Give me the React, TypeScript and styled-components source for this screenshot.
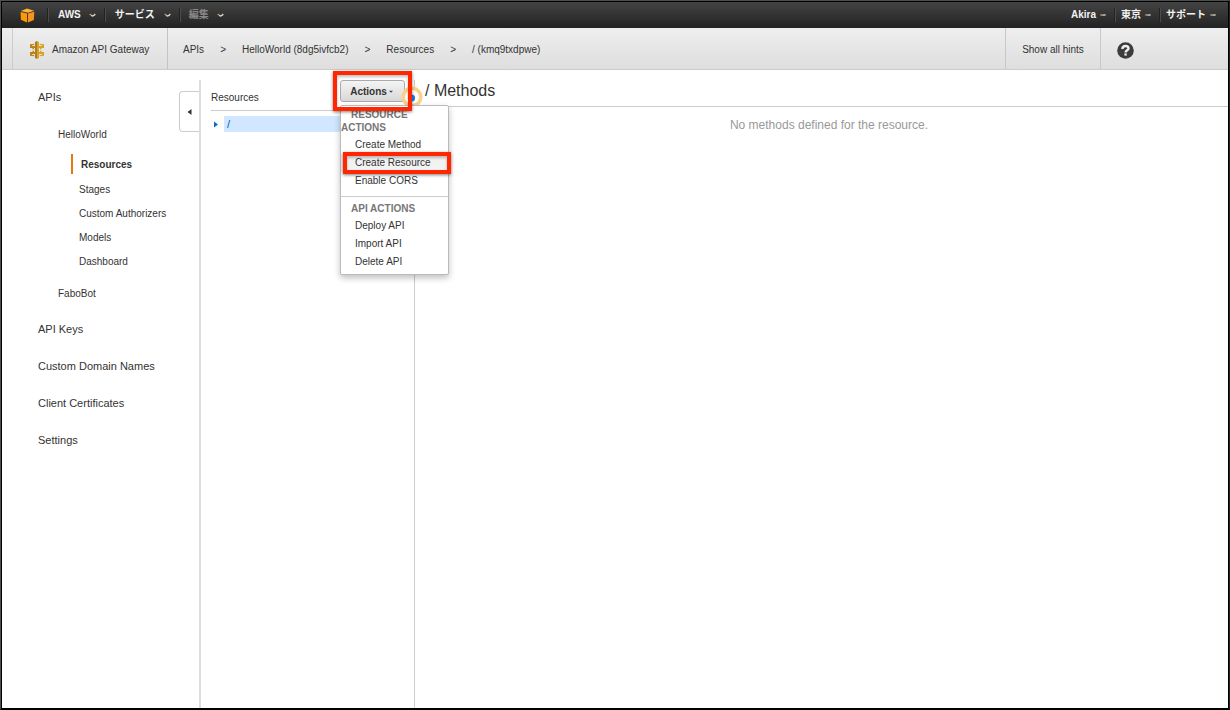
import React from 'react';
import styled, { createGlobalStyle, css } from 'styled-components';

const GlobalStyle = createGlobalStyle`
  *, *::before, *::after { box-sizing: border-box; }
  body {
    margin: 0;
    font-family: "Liberation Sans", "Noto Sans CJK JP", sans-serif;
    font-size: 10px;
    color: #333;
    background: #fff;
  }
  a { color: inherit; text-decoration: none; }
  ul, ol { list-style: none; margin: 0; padding: 0; }
  button { font: inherit; color: inherit; cursor: pointer; }
  svg { display: block; flex: none; }
`;

const Frame = styled.div`
  display: flex;
  min-height: 100vh;
  padding: 1px;
  background: #000;
  border: 1px solid #4b4f4d;
  border-right-color: #222;
  border-bottom-color: #000;
`;

const Page = styled.div`
  flex: 1;
  min-width: 0;
  display: flex;
  flex-direction: column;
  background: #fff;
`;

const TopBar = styled.header`
  display: flex;
  align-items: center;
  justify-content: space-between;
  height: 26px;
  padding: 0 12px 0 18px;
  background: linear-gradient(#444, #222);
`;

const TopGroup = styled.nav`
  display: flex;
  align-items: center;
`;

const Separator = styled.span<{ $before: number; $after: number }>`
  width: 2px;
  height: 14px;
  margin: 0 ${(p) => p.$after}px 0 ${(p) => p.$before}px;
  background: #222;
  border-right: 1px solid #4c4c4c;
`;

const TopItem = styled.button<{ $dim?: boolean; $gap: number }>`
  display: flex;
  align-items: center;
  gap: ${(p) => p.$gap}px;
  padding: 0;
  border: 0;
  background: none;
  font-weight: 700;
  line-height: 16px;
  color: ${(p) => (p.$dim ? '#888' : '#f2f2f2')};
`;

const ServiceBar = styled.div`
  display: flex;
  height: 42px;
  padding-left: 10px;
  background: linear-gradient(#eee, #dedede);
  border-bottom: 1px solid #ccc;
`;

const ServiceName = styled.a`
  display: flex;
  align-items: center;
  gap: 7px;
  width: 156px;
  padding: 2px 0 0 16px;
  border-left: 1px solid #ccc;
  border-right: 1px solid #c4c4c4;
`;

const Breadcrumbs = styled.ol`
  flex: 1;
  display: flex;
  align-items: center;
  gap: 16px;
  padding: 2px 0 0 15px;
`;

const Hints = styled.button`
  width: 96px;
  padding: 2px 0 0;
  background: none;
  border: solid #c8c8c8;
  border-width: 0 1px;
`;

const HelpButton = styled.button`
  display: flex;
  align-items: center;
  width: 127px;
  padding: 4px 0 0 16px;
  border: 0;
  background: none;
`;

const Body = styled.div`
  flex: 1;
  display: flex;
  padding-top: 10px;
`;

const Sidebar = styled.aside`
  flex: none;
  display: flex;
  align-items: flex-start;
  width: 199px;
  border-right: 2px solid #ddd;
`;

const SideNav = styled.nav`
  flex: 1;
  min-width: 0;
  padding-left: 36px;
  white-space: nowrap;
`;

const TopLink = styled.a`
  display: block;
  font-size: 11px;
  line-height: 35px;
  height: 37px;
`;

const ApiLink = styled.a`
  display: block;
  height: 36px;
  padding-left: 20px;
  line-height: 35px;
`;

const SubList = styled.ul`
  padding: 1px 0 3px 33px;
`;

const SubItem = styled.li<{ $active?: boolean }>`
  display: flex;
  align-items: center;
  height: 24px;
  padding-left: 8px;
  ${(p) =>
    p.$active &&
    css`
      height: 20px;
      margin-bottom: 3px;
      border-left: 2px solid #e47911;
      font-weight: 700;
    `}
`;

const Collapse = styled.button`
  display: flex;
  align-items: center;
  width: 20px;
  height: 41px;
  margin-top: 11px;
  padding: 0 0 0 7px;
  background: #fff;
  border: 1px solid #ccc;
  border-right: 0;
  border-radius: 4px 0 0 4px;
`;

const ResourcePane = styled.section`
  position: relative;
  flex: none;
  width: 214px;
  padding: 0 9px 0 10px;
  border-right: 1px solid #ccc;
`;

const PaneHead = styled.div`
  display: flex;
  align-items: flex-start;
  justify-content: space-between;
  height: 31px;
  border-bottom: 1px solid #ccc;
`;

const PaneTitle = styled.h2`
  margin: 0;
  font-size: 10px;
  font-weight: 400;
  line-height: 35px;
`;

const Highlight = styled.span<{ $inset: string }>`
  position: absolute;
  inset: ${(p) => p.$inset};
  z-index: 3;
  border: 4px solid #ff2600;
  box-shadow: 0 1px 3px rgba(0, 0, 0, 0.5), inset 0 2px 3px rgba(0, 0, 0, 0.25);
  pointer-events: none;
`;

const ActionsWrap = styled.div`
  position: relative;
`;

const ActionsButton = styled.button`
  display: flex;
  align-items: center;
  justify-content: center;
  gap: 2px;
  width: 65px;
  height: 22px;
  padding: 0 2px 0 0;
  font-weight: 700;
  background: linear-gradient(#f4f4f4, #d8d8d8);
  border: 1px solid #aaa;
  border-radius: 3px;
`;

const Menu = styled.div`
  position: absolute;
  top: 25px;
  left: 0;
  z-index: 2;
  width: 109px;
  padding: 2px 0 3px;
  background: #fff;
  border: 1px solid #bbb;
  border-radius: 2px;
  box-shadow: 0 3px 6px rgba(0, 0, 0, 0.25);
`;

const MenuHeading = styled.h3`
  margin: 0;
  padding-bottom: 2px;
  text-indent: 10px;
  font-size: 10px;
  font-weight: 700;
  line-height: 13px;
  color: #777;
`;

const MenuItem = styled.button<{ $hover?: boolean }>`
  position: relative;
  display: block;
  width: 100%;
  padding: 0 0 0 14px;
  border: 0;
  background: ${(p) => (p.$hover ? '#f2f2f2' : 'transparent')};
  text-align: left;
  line-height: 18px;
`;

const Divider = styled.hr`
  height: 1px;
  margin: 6px 0 5px;
  border: 0;
  background: #ccc;
`;

const Spinner = styled.svg`
  position: absolute;
  top: 6px;
  right: -9px;
  z-index: 1;
`;

const TreeRow = styled.div`
  display: flex;
  align-items: center;
  gap: 6px;
  height: 16px;
  margin-top: 5px;
  padding-left: 3px;
`;

const TreeLabel = styled.a`
  flex: 1;
  padding-left: 3px;
  font-size: 11px;
  line-height: 16px;
  color: #0a5cb8;
  background: #d0e7ff;
`;

const Main = styled.main`
  flex: 1;
  min-width: 0;
`;

const MainTitle = styled.h1`
  height: 27px;
  margin: 0;
  padding-left: 10px;
  font-size: 16px;
  font-weight: 400;
  line-height: 22px;
  border-bottom: 1px solid #ccc;
`;

const Empty = styled.p`
  margin: 10px 0 0;
  padding-left: 15px;
  font-size: 12px;
  line-height: 16px;
  text-align: center;
  color: #999;
`;

const Chevron = () => (
  <svg width="7" height="6" viewBox="0 0 7 6" fill="none" strokeWidth="1.3">
    <path d="M.7 2 3.300 4" stroke="#c79a62" />
    <path d="M2.300 3.400c1 1 2 .9 4-1.400" stroke="#d8d8d8" />
  </svg>
);

const Dash = () => (
  <svg width="6" height="4" viewBox="0 0 6 4" fill="none" strokeWidth="1.3">
    <path d="M.3 1.800 3 2.200" stroke="#c9a67b" />
    <path d="M2.800 2.200 5.700 1.800" stroke="#ddd" />
  </svg>
);

const Cube = () => (
  <svg width="15" height="15" viewBox="0 0 15 15">
    <path d="M.8 3 7 .6 14.200 2.700 8 4.800z" fill="#ffb13b" />
    <path d="M.6 3.900 7 5.600v8.800L.9 11.800z" fill="#f90" />
    <path d="M7.900 5.600 14.300 3.700 13.800 12 7.900 14.400z" fill="#f7941d" />
  </svg>
);

const GatewayIcon = () => (
  <svg width="16" height="18" viewBox="0 0 16 18">
    <path d="M6 1 8 0v18l-2-1z" fill="#b07d14" />
    <path d="M8 0l2 1v16l-2 1z" fill="#d9a02a" />
    <path d="M1 3.200 5.200 2.800V4H3.200v1H7v2H1z" fill="#b9831a" />
    <path d="M15 3.200 10.800 2.800V4h2v1H9v2h6z" fill="#d9a02a" />
    <path d="M1 14.800 5.200 15.200V14H3.200v-1H7v-2H1z" fill="#b9831a" />
    <path d="M15 14.800 10.800 15.200V14h2v-1H9v-2h6z" fill="#d9a02a" />
    <path d="M3.500 7h1.500v1.200H3.500zM3.500 9.800h1.500V11H3.500z" fill="#b9831a" />
    <path d="M11 7h1.500v1.200H11zM11 9.800h1.500V11H11z" fill="#d9a02a" />
  </svg>
);

const HelpIcon = () => (
  <svg width="17" height="17" viewBox="0 0 17 17" fill="none">
    <circle cx="8.500" cy="8.500" r="8.300" fill="#3c3c3c" />
    <path d="M5.400 6.900C5.400 4.800 6.700 4 8.500 4s3 .9 3 2.400c0 1.900-2.900 1.900-2.900 4.100" stroke="#eee" strokeWidth="2.400" />
    <path d="M7.400 11.400h2.400v2.200H7.400z" fill="#eee" />
  </svg>
);

const crumbs = ['APIs', 'HelloWorld (8dg5ivfcb2)', 'Resources', '/ (kmq9txdpwe)'];
const apiPages = ['Resources', 'Stages', 'Custom Authorizers', 'Models', 'Dashboard'];
const sections = ['API Keys', 'Custom Domain Names', 'Client Certificates', 'Settings'];

export default function App() {
  return (
    <Frame>
      <GlobalStyle />
      <Page>
        <TopBar>
          <TopGroup>
            <a href="#home" aria-label="Home"><Cube /></a>
            <Separator $before={12} $after={9} />
            <TopItem $gap={8}>AWS<Chevron /></TopItem>
            <Separator $before={8} $after={9} />
            <TopItem $gap={9}>サービス<Chevron /></TopItem>
            <Separator $before={8} $after={8} />
            <TopItem $gap={8} $dim>編集<Chevron /></TopItem>
          </TopGroup>
          <TopGroup>
            <TopItem $gap={4}>Akira<Dash /></TopItem>
            <Separator $before={8} $after={5} />
            <TopItem $gap={4}>東京<Dash /></TopItem>
            <Separator $before={8} $after={5} />
            <TopItem $gap={4}>サポート<Dash /></TopItem>
          </TopGroup>
        </TopBar>

        <ServiceBar>
          <ServiceName href="#gateway"><GatewayIcon />Amazon API Gateway</ServiceName>
          <Breadcrumbs>
            {crumbs.map((c, i) => (
              <React.Fragment key={c}>
                {i > 0 && <li aria-hidden="true">&gt;</li>}
                <li><a href="#crumb">{c}</a></li>
              </React.Fragment>
            ))}
          </Breadcrumbs>
          <Hints>Show all hints</Hints>
          <HelpButton aria-label="Help"><HelpIcon /></HelpButton>
        </ServiceBar>

        <Body>
          <Sidebar>
            <SideNav>
              <TopLink href="#apis">APIs</TopLink>
              <ApiLink href="#helloworld">HelloWorld</ApiLink>
              <SubList>
                {apiPages.map((p, i) => (
                  <SubItem key={p} $active={i === 0}><a href="#page">{p}</a></SubItem>
                ))}
              </SubList>
              <ApiLink href="#fabobot">FaboBot</ApiLink>
              {sections.map((s) => <TopLink key={s} href="#section">{s}</TopLink>)}
            </SideNav>
            <Collapse aria-label="Collapse sidebar">
              <svg width="5" height="6" viewBox="0 0 5 6"><path d="M4.500 0v6L.5 3z" fill="#333" /></svg>
            </Collapse>
          </Sidebar>

          <ResourcePane>
            <PaneHead>
              <PaneTitle>Resources</PaneTitle>
              <ActionsWrap>
                <ActionsButton aria-expanded="true">
                  Actions
                  <svg width="4" height="3" viewBox="0 0 4 3"><path d="M0 .7h4L2 2.800z" fill="#444" /></svg>
                </ActionsButton>
                <Highlight $inset="-9px -7px" />
                <Menu>
                  <MenuHeading>RESOURCE ACTIONS</MenuHeading>
                  <MenuItem>Create Method</MenuItem>
                  <MenuItem $hover>
                    Create Resource
                    <Highlight $inset="-2px -3px -2px 2px" />
                  </MenuItem>
                  <MenuItem>Enable CORS</MenuItem>
                  <Divider />
                  <MenuHeading>API ACTIONS</MenuHeading>
                  <MenuItem>Deploy API</MenuItem>
                  <MenuItem>Import API</MenuItem>
                  <MenuItem>Delete API</MenuItem>
                </Menu>
              </ActionsWrap>
            </PaneHead>
            <TreeRow>
              <svg width="4" height="7" viewBox="0 0 4 7"><path d="M0 .5v6l4-3z" fill="#0a6cc8" /></svg>
              <TreeLabel href="#root-resource">/</TreeLabel>
            </TreeRow>
            <Spinner width="22" height="22" viewBox="0 0 22 22">
              <circle cx="11" cy="11" r="8.800" fill="#fff" stroke="#fbd08a" strokeWidth="3.600" />
              <circle cx="10.500" cy="12" r="3.600" fill="#1a7de8" />
            </Spinner>
          </ResourcePane>

          <Main>
            <MainTitle>/ Methods</MainTitle>
            <Empty>No methods defined for the resource.</Empty>
          </Main>
        </Body>
      </Page>
    </Frame>
  );
}
